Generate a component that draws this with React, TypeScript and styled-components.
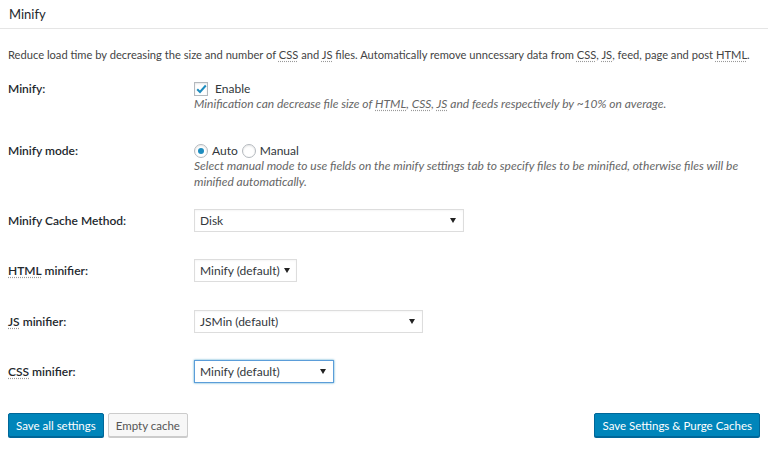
import * as React from 'react'
import styled, { createGlobalStyle } from 'styled-components'

const GlobalStyle = createGlobalStyle`
	body {
		margin: 0;
		background: #ffffff;
		font-family: Lato, "Open Sans", sans-serif;
		font-size: 12px;
		color: #23282d;
	}
`

const Page = styled.div`
	width: 768px;
	height: 460px;
	overflow: hidden;
	display: flex;
	flex-direction: column;
`

const Header = styled.div`
	height: 28px;
	border-bottom: 1px solid #e5e5e5;
	display: flex;
	align-items: center;
	padding: 0 9px;
	font-size: 13px;
	color: #23282d;
`

const Intro = styled.p`
	margin: 19px 8px 0;
	font-size: 11.15px;
	color: #444;
	white-space: nowrap;
`

const Abbr = styled.abbr`
	text-decoration: underline dotted #999;
	text-underline-offset: 2px;
	cursor: help;
`

const Rows = styled.div`
	display: flex;
	flex-direction: column;
	padding: 0 8px;
`

const Row = styled.div<{ $top: number }>`
	display: grid;
	grid-template-columns: 186px 1fr;
	align-items: start;
	margin-top: ${p => p.$top}px;
`

const Label = styled.div<{ $pad: number }>`
	font-size: 12px;
	font-weight: 600;
	color: #23282d;
	line-height: 15px;
	padding-top: ${p => p.$pad}px;
`

const Field = styled.div`
	display: flex;
	flex-direction: column;
`

const Inline = styled.div`
	display: flex;
	align-items: center;
	gap: 4px;
	font-size: 12px;
	color: #32373c;
	line-height: 15px;
`

const Box = styled.span`
	width: 12px;
	height: 12px;
	border: 1px solid #b4b9be;
	box-shadow: inset 0 1px 2px rgba(0, 0, 0, 0.1);
	background: #fff;
	display: inline-flex;
	align-items: center;
	justify-content: center;
	margin-right: 3px;
`

const Radio = styled.span<{ $on?: boolean }>`
	width: 12px;
	height: 12px;
	border-radius: 50%;
	border: 1px solid #b4b9be;
	box-shadow: inset 0 1px 2px rgba(0, 0, 0, 0.1);
	background: #fff;
	display: inline-flex;
	align-items: center;
	justify-content: center;
	&::after {
		content: '';
		width: 6px;
		height: 6px;
		border-radius: 50%;
		background: ${p => (p.$on ? '#1e8cbe' : 'transparent')};
	}
`

const Desc = styled.div`
	font-style: italic;
	font-size: 12px;
	color: #666;
	line-height: 16px;
	width: 548px;
`

const Select = styled.div<{ $w: number; $focus?: boolean }>`
	width: ${p => p.$w}px;
	height: 23px;
	box-sizing: border-box;
	border: 1px solid ${p => (p.$focus ? '#5b9dd9' : '#ddd')};
	box-shadow: ${p => (p.$focus ? '0 0 2px rgba(30, 140, 190, 0.8)' : 'inset 0 1px 2px rgba(0,0,0,0.04)')};
	background: #fff;
	display: flex;
	align-items: center;
	justify-content: space-between;
	gap: 4px;
	padding: 0 7px 0 5px;
	font-size: 12px;
	color: #32373c;
	white-space: nowrap;
	svg {
		flex-shrink: 0;
	}
`

const Arrow = () => (
	<svg width="6" height="5" viewBox="0 0 6 5">
		<path d="M0 0 L6 0 L3 5 Z" fill="#222" />
	</svg>
)

const Check = () => (
	<svg width="11" height="10" viewBox="0 0 11 10">
		<path d="M1.2 5.2 L4 8 L9.8 1.5" fill="none" stroke="#1e8cbe" strokeWidth="2" />
	</svg>
)

const Footer = styled.div`
	margin-top: auto;
	margin-bottom: 23px;
	padding: 0 8px;
	display: flex;
	align-items: center;
	gap: 4px;
`

const Button = styled.button<{ $primary?: boolean }>`
	height: 24px;
	padding: 0 7px;
	font-family: inherit;
	font-size: 11.5px;
	border-radius: 2px;
	cursor: pointer;
	border: 1px solid ${p => (p.$primary ? '#006799' : '#ccc')};
	background: ${p => (p.$primary ? '#0085ba' : '#f7f7f7')};
	color: ${p => (p.$primary ? '#fff' : '#555')};
	box-shadow: ${p => (p.$primary ? '0 1px 0 #006799' : '0 1px 0 #ccc')};
`

const Spacer = styled.div`
	flex: 1;
`

export default function App() {
	return (
		<Page>
			<GlobalStyle />
			<Header>Minify</Header>
			<Intro>
				Reduce load time by decreasing the size and number of <Abbr>CSS</Abbr> and <Abbr>JS</Abbr> files.
				Automatically remove unncessary data from <Abbr>CSS</Abbr>, <Abbr>JS</Abbr>, feed, page and post{' '}
				<Abbr>HTML</Abbr>.
			</Intro>
			<Rows>
				<Row $top={20}>
					<Label $pad={0}>Minify:</Label>
					<Field>
						<Inline>
							<Box>
								<Check />
							</Box>
							Enable
						</Inline>
						<Desc>
							Minification can decrease file size of <Abbr>HTML</Abbr>, <Abbr>CSS</Abbr>, <Abbr>JS</Abbr> and
							feeds respectively by ~10% on average.
						</Desc>
					</Field>
				</Row>
				<Row $top={31}>
					<Label $pad={0}>Minify mode:</Label>
					<Field>
						<Inline>
							<Radio $on />
							Auto
							<Radio />
							Manual
						</Inline>
						<Desc>
							Select manual mode to use fields on the minify settings tab to specify files to be minified, otherwise
							files will be minified automatically.
						</Desc>
					</Field>
				</Row>
				<Row $top={19}>
					<Label $pad={4}>Minify Cache Method:</Label>
					<Select $w={270}>
						Disk
						<Arrow />
					</Select>
				</Row>
				<Row $top={27}>
					<Label $pad={4}>
						<Abbr>HTML</Abbr> minifier:
					</Label>
					<Select $w={103}>
						Minify (default)
						<Arrow />
					</Select>
				</Row>
				<Row $top={28}>
					<Label $pad={4}>
						<Abbr>JS</Abbr> minifier:
					</Label>
					<Select $w={229}>
						JSMin (default)
						<Arrow />
					</Select>
				</Row>
				<Row $top={27}>
					<Label $pad={4}>
						<Abbr>CSS</Abbr> minifier:
					</Label>
					<Select $w={140} $focus>
						Minify (default)
						<Arrow />
					</Select>
				</Row>
			</Rows>
			<Footer>
				<Button $primary>Save all settings</Button>
				<Button>Empty cache</Button>
				<Spacer />
				<Button $primary>Save Settings &amp; Purge Caches</Button>
			</Footer>
		</Page>
	)
}
